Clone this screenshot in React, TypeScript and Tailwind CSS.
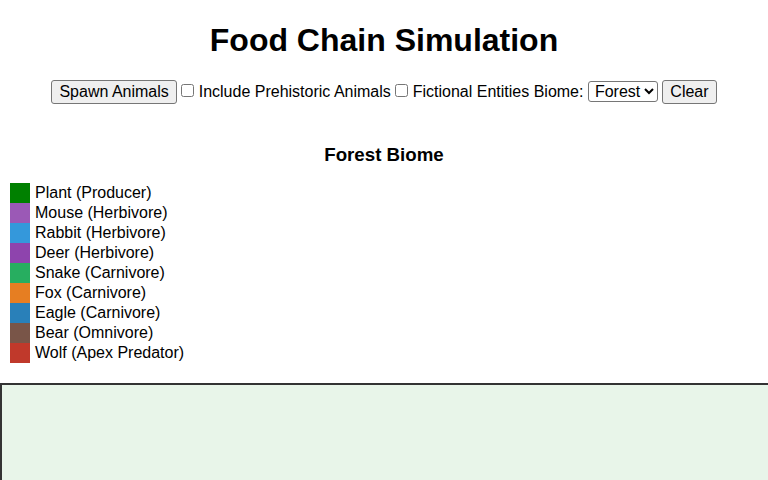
import { useState } from 'react'

const species = [
  { name: 'Plant (Producer)', color: 'bg-[#008000]' },
  { name: 'Mouse (Herbivore)', color: 'bg-[#9b59b6]' },
  { name: 'Rabbit (Herbivore)', color: 'bg-[#3498db]' },
  { name: 'Deer (Herbivore)', color: 'bg-[#8e44ad]' },
  { name: 'Snake (Carnivore)', color: 'bg-[#27ae60]' },
  { name: 'Fox (Carnivore)', color: 'bg-[#e67e22]' },
  { name: 'Eagle (Carnivore)', color: 'bg-[#2980b9]' },
  { name: 'Bear (Omnivore)', color: 'bg-[#795548]' },
  { name: 'Wolf (Apex Predator)', color: 'bg-[#c0392b]' },
]

export default function App() {
  const [biome, setBiome] = useState('Forest')

  return (
    <div className="font-['Liberation_Sans',Arial,sans-serif] text-base text-black bg-white h-[480px] overflow-hidden">
      <h1 className="text-[32px] font-bold text-center leading-[37px] pt-[22px] mb-[20px]">Food Chain Simulation</h1>

      {/* Controls */}
      <div className="text-center leading-[24px] mb-5">
        <button className="px-[7px] py-px border border-[#767676] rounded-[3px] bg-[#efefef] leading-[20px] h-6 align-middle">Spawn Animals</button>{' '}
        <input type="checkbox" className="align-[-1px] w-[13px] h-[13px]" />{' '}
        <span className="align-middle">Include Prehistoric Animals</span>{' '}
        <input type="checkbox" className="align-[-1px] w-[13px] h-[13px]" />{' '}
        <span className="align-middle">Fictional Entities</span>{' '}
        <span className="align-middle">Biome:</span>{' '}
        <select
          value={biome}
          onChange={e => setBiome(e.target.value)}
          className="w-[70px] h-[21px] border border-[#767676] rounded-[3px] bg-white pl-[2px] leading-[19px] align-middle"
        >
          <option>Forest</option>
          <option>Ocean</option>
        </select>{' '}
        <button className="px-[7px] py-px border border-[#767676] rounded-[3px] bg-[#efefef] leading-[20px] h-6 align-middle">Clear</button>
      </div>

      <h3 className="text-[18.72px] font-bold text-center leading-[22px] pt-[20px] mb-[17px]">{biome} Biome</h3>

      {/* Legend */}
      <div className="pl-[10px] mb-5">
        {species.map(s => (
          <div key={s.name} className="flex items-center h-5">
            <div className={`w-5 h-5 ${s.color} mr-[5px]`} />
            <span className="leading-5">{s.name}</span>
          </div>
        ))}
      </div>

      {/* Canvas */}
      <div className="w-[800px] h-[500px] border-2 border-[#333] bg-[#e8f5e9]" />
    </div>
  )
}
